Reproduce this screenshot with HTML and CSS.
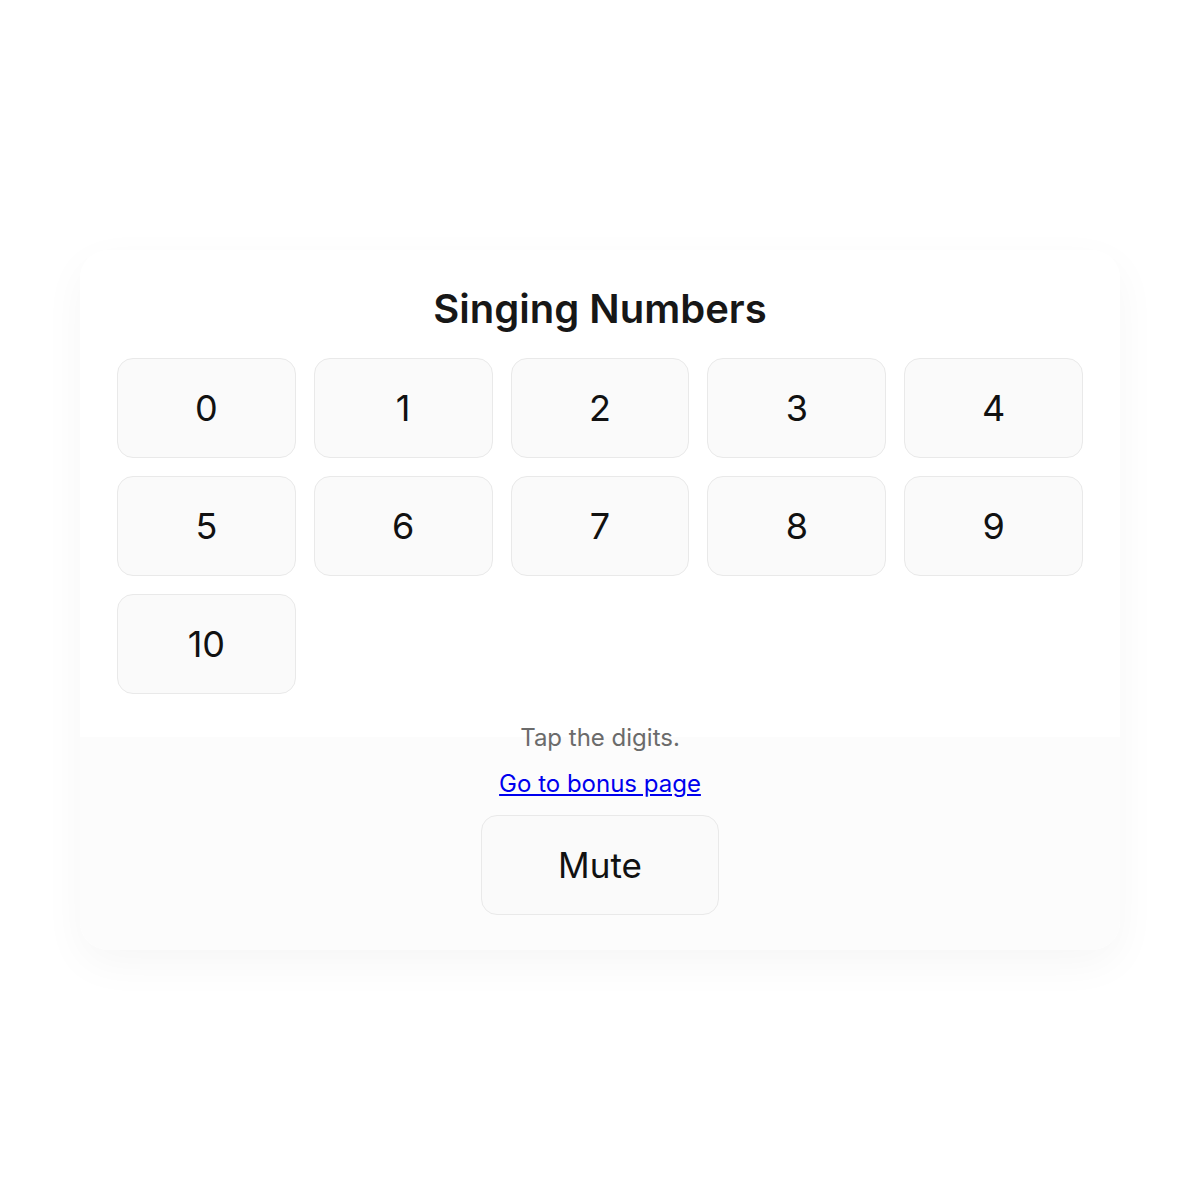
FILE: index.html
```html
<!DOCTYPE html>
<html lang="en">
<head>
<meta charset="utf-8">
<title>Singing Numbers</title>
<link rel="stylesheet" href="styles.css">
</head>
<body>
<main class="card">
  <h1 class="title">Singing Numbers</h1>
  <div class="pad">
    <button class="key">0</button>
    <button class="key">1</button>
    <button class="key">2</button>
    <button class="key">3</button>
    <button class="key">4</button>
    <button class="key">5</button>
    <button class="key">6</button>
    <button class="key">7</button>
    <button class="key">8</button>
    <button class="key">9</button>
    <button class="key">10</button>
  </div>
  <p class="hint">Tap the digits.</p>
  <a class="bonus" href="#bonus">Go to bonus page</a>
  <button class="key mute">Mute</button>
</main>
</body>
</html>
```
FILE: styles.css
```css
html, body {
  margin: 0;
  padding: 0;
}
body {
  min-height: 100vh;
  display: flex;
  align-items: center;
  justify-content: center;
  background: #ffffff;
  font-family: Inter, "Noto Sans", sans-serif;
  color: #111111;
}
.card {
  width: 1040px;
  box-sizing: border-box;
  padding: 35px 37px 35px;
  border-radius: 28px;
  background: linear-gradient(to bottom, #ffffff 487px, #fcfcfc 487px);
  box-shadow: 0 14px 44px rgba(0, 0, 0, 0.04);
  display: flex;
  flex-direction: column;
  align-items: center;
}
.title {
  margin: 0 0 25px;
  font-size: 40px;
  line-height: 1.2;
  font-weight: 600;
  color: #171717;
}
.pad {
  align-self: stretch;
  display: grid;
  grid-template-columns: repeat(5, 1fr);
  gap: 18px;
}
.key {
  height: 100px;
  box-sizing: border-box;
  border: 1px solid #e9e9e9;
  border-radius: 16px;
  background: #fafafa;
  font-family: Inter, "Noto Sans", sans-serif;
  font-size: 36px;
  font-weight: 400;
  color: #111111;
  padding: 0;
}
.hint {
  margin: 30px 0 0;
  font-size: 24px;
  line-height: 1.2;
  color: #6b6b6b;
}
.bonus {
  margin-top: 17px;
  font-size: 24px;
  line-height: 1.2;
  color: #0000ee;
  text-decoration: underline;
}
.mute {
  margin-top: 17px;
  width: 238px;
  font-size: 35px;
}
```
